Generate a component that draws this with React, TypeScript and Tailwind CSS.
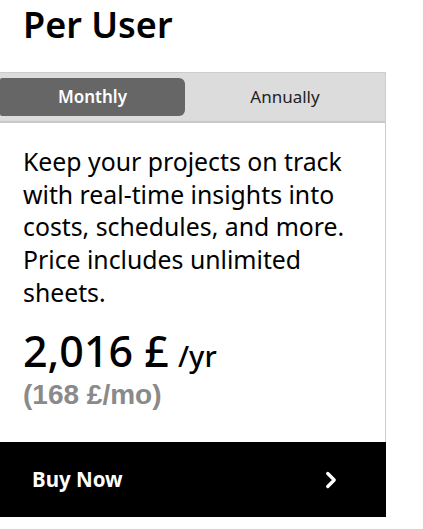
import { ChevronRight } from 'lucide-react'

export default function App() {
  return (
    <div className="w-[423px] h-[529px] bg-white font-['Noto_Sans',sans-serif] text-black">
      <h1 className="pl-[23px] pt-[2px] h-[72px] text-[36px] font-semibold leading-[46px]">Per User</h1>

      <div className="w-[386px] border-r border-[#cccccc]">
        {/* billing toggle */}
        <div className="flex h-[51px] bg-[#dcdcdc] border-t border-[#cccccc] border-b-2 border-b-[#c8c8c8] pt-[5px] pb-[5px]">
          <button className="w-[185px] h-[38px] rounded-r-[6px] rounded-l-[2px] bg-[#666666] text-white text-[17px] font-semibold">
            Monthly
          </button>
          <button className="flex-1 h-[38px] text-[17px] text-[#222222]">Annually</button>
        </div>

        <div className="px-[23px] pt-[22px] h-[319px]">
          <p className="text-[24.8px] leading-[32.7px]">
            Keep your projects on track with real-time insights into costs, schedules, and more. Price includes unlimited sheets.
          </p>
          <div className="mt-[20px] h-[44px] flex items-baseline gap-[9px]">
            <span className="text-[43px] leading-[44px] font-medium">2,016 £</span>
            <span className="text-[29px] leading-[30px] font-medium">/yr</span>
          </div>
          <p className="mt-[6px] font-['Liberation_Sans',sans-serif] font-bold text-[28px] leading-[32px] text-[#8a8a8a]">(168 £/mo)</p>
        </div>
      </div>

      <button className="w-[386px] h-[75px] bg-black text-white flex items-center justify-between pl-[32px] pr-[44px]">
        <span className="text-[20.5px] font-bold">Buy Now</span>
        <ChevronRight size={26} strokeWidth={3} className="mr-[-2px]" />
      </button>
    </div>
  )
}
